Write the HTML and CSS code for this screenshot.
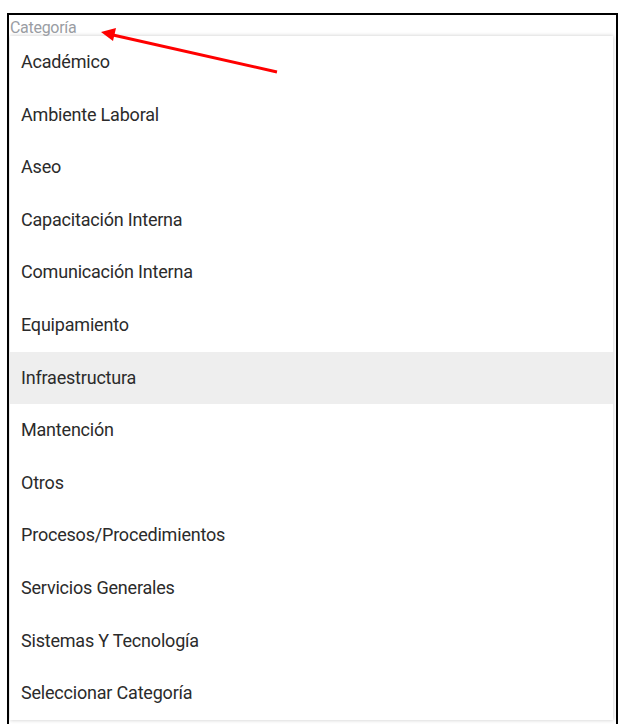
FILE: index.html
```html
<!DOCTYPE html>
<html lang="es">
<head>
<meta charset="utf-8">
<title>Categoría</title>
<link rel="stylesheet" href="styles.css">
</head>
<body>
<div class="field">
  <div class="label">Categoría</div>
  <ul class="menu">
    <li class="item">Académico</li>
    <li class="item">Ambiente Laboral</li>
    <li class="item">Aseo</li>
    <li class="item">Capacitación Interna</li>
    <li class="item">Comunicación Interna</li>
    <li class="item">Equipamiento</li>
    <li class="item active">Infraestructura</li>
    <li class="item">Mantención</li>
    <li class="item">Otros</li>
    <li class="item">Procesos/Procedimientos</li>
    <li class="item">Servicios Generales</li>
    <li class="item">Sistemas Y Tecnología</li>
    <li class="item">Seleccionar Categoría</li>
  </ul>
  <svg class="arrow" width="200" height="60" viewBox="0 0 200 60">
    <line x1="180" y1="52" x2="16" y2="15" stroke="#ff0000" stroke-width="3" />
    <polygon points="4,12 19,8 16,21" fill="#ff0000" />
  </svg>
</div>
</body>
</html>
```
FILE: styles.css
```css
html, body {
  margin: 0;
  padding: 0;
  background: #ffffff;
  overflow: hidden;
}
body {
  font-family: Roboto, "Liberation Sans", sans-serif;
}
.field {
  position: relative;
  margin: 13px 0 0 7px;
  width: 606px;
  height: 760px;
  border: 2px solid #000;
  border-bottom: none;
  padding-left: 1px;
}
.label {
  font-size: 16px;
  line-height: 20px;
  color: #9a9da3;
  padding-top: 3px;
  height: 18px;
  letter-spacing: -0.3px;
}
.menu {
  list-style: none;
  margin: 0;
  padding: 0;
  width: 603px;
  background: #fff;
  box-shadow: 0 0 4px rgba(0, 0, 0, 0.22);
}
.item {
  height: 52.6px;
  line-height: 52.6px;
  padding-left: 11px;
  font-size: 18px;
  letter-spacing: -0.2px;
  color: #2b2b2b;
}
.active {
  background: #eeeeee;
}
.arrow {
  position: absolute;
  left: 88px;
  top: 5px;
}
```
